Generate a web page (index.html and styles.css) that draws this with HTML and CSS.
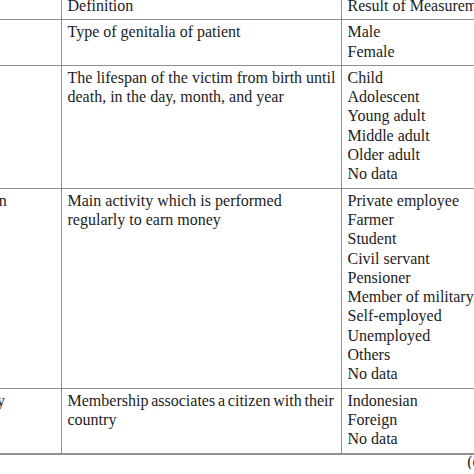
FILE: index.html
```html
<!DOCTYPE html>
<html lang="en">
<head>
<meta charset="utf-8">
<title>Variables</title>
<link rel="stylesheet" href="styles.css">
</head>
<body>
<div class="sheet">
  <table class="vars">
    <colgroup>
      <col class="w-var">
      <col class="w-def">
      <col class="w-res">
    </colgroup>
    <thead>
      <tr>
        <th class="c-var">Variable</th>
        <th class="c-def">Definition</th>
        <th class="c-res">Result of Measurement</th>
      </tr>
    </thead>
    <tbody>
      <tr>
        <td class="c-var">Sex</td>
        <td class="c-def">Type of genitalia of patient</td>
        <td class="c-res"><div>Male</div><div>Female</div></td>
      </tr>
      <tr>
        <td class="c-var">Age</td>
        <td class="c-def">The lifespan of the victim from birth until death, in the day, month, and year</td>
        <td class="c-res"><div>Child</div><div>Adolescent</div><div>Young adult</div><div>Middle adult</div><div>Older adult</div><div>No data</div></td>
      </tr>
      <tr>
        <td class="c-var">Occupation</td>
        <td class="c-def">Main activity which is performed regularly to earn money</td>
        <td class="c-res"><div>Private employee</div><div>Farmer</div><div>Student</div><div>Civil servant</div><div>Pensioner</div><div>Member of military/police</div><div>Self-employed</div><div>Unemployed</div><div>Others</div><div>No data</div></td>
      </tr>
      <tr>
        <td class="c-var">Nationality</td>
        <td class="c-def tight">Membership associates a citizen with their country</td>
        <td class="c-res"><div>Indonesian</div><div>Foreign</div><div>No data</div></td>
      </tr>
    </tbody>
  </table>
  <div class="cont">(continued)</div>
</div>
</body>
</html>
```
FILE: styles.css
```css
html, body {
  margin: 0;
  padding: 0;
  background: #ffffff;
  overflow: hidden;
}
.sheet {
  width: 614px;
  margin: -7px 0 0 -73px;
  font-family: "Liberation Serif", "Times New Roman", serif;
  font-size: 16px;
  color: #1c1c1c;
}
.vars {
  width: 614px;
  border-collapse: collapse;
  table-layout: fixed;
  border-top: 1px solid #8e8e8e;
  border-bottom: 2px solid #909090;
}
.w-var { width: 134px; }
.w-def { width: 280px; }
.w-res { width: 200px; }
.vars th,
.vars td {
  box-sizing: border-box;
  font-weight: normal;
  text-align: left;
  vertical-align: top;
  line-height: 19.3px;
  padding: 2px 6px 4px 6px;
}
.vars th {
  border-bottom: 1px solid #8e8e8e;
}
.vars tbody tr + tr td {
  border-top: 1px solid #8e8e8e;
}
.vars .c-def,
.vars .c-res {
  border-left: 1px solid #8e8e8e;
}
.vars .c-def {
  padding-right: 3px;
}
.vars .c-res {
  white-space: nowrap;
}
.vars .tight {
  word-spacing: -1.2px;
}
.cont {
  text-align: right;
  line-height: 14px;
}
```
